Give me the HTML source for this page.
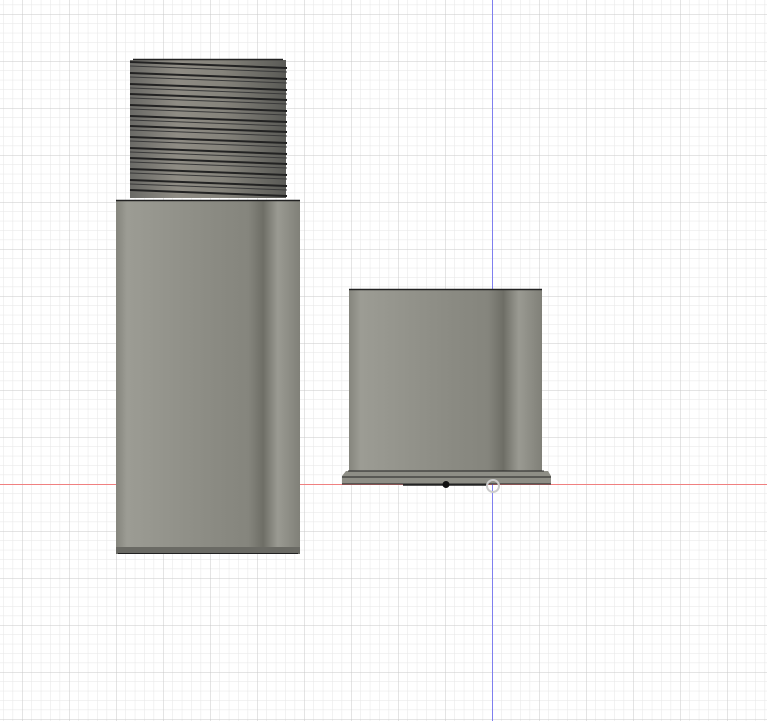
<!DOCTYPE html>
<html><head><style>html,body{margin:0;padding:0;background:#fff;overflow:hidden}</style></head>
<body>
<svg width="767" height="721" xmlns="http://www.w3.org/2000/svg">
<defs>
<pattern id="minor" x="492" y="484" width="9.4" height="9.4" patternUnits="userSpaceOnUse">
<path d="M0 0V9.4M0 0H9.4" stroke="#e6e6e6" stroke-width="1" fill="none"/>
</pattern>
<pattern id="major" x="492" y="484" width="47" height="47" patternUnits="userSpaceOnUse">
<path d="M0 0V47M0 0H47" stroke="#c9c9c9" stroke-width="1" fill="none"/>
</pattern>
<linearGradient id="cyl" x1="0" x2="1">
<stop offset="0" stop-color="#85857d"/>
<stop offset="0.06" stop-color="#9c9c94"/>
<stop offset="0.3" stop-color="#93938b"/>
<stop offset="0.55" stop-color="#8a8a82"/>
<stop offset="0.72" stop-color="#85857d"/>
<stop offset="0.8" stop-color="#6e6e66"/>
<stop offset="0.88" stop-color="#9a9a92"/>
<stop offset="1" stop-color="#808078"/>
</linearGradient>
<linearGradient id="thr" x1="0" x2="1">
<stop offset="0" stop-color="#6a6a66"/>
<stop offset="0.3" stop-color="#8f8c84"/>
<stop offset="0.6" stop-color="#85837b"/>
<stop offset="1" stop-color="#5a5a56"/>
</linearGradient>
</defs>
<rect width="767" height="721" fill="url(#minor)"/>
<rect width="767" height="721" fill="url(#major)"/>
<line x1="0" y1="484.5" x2="767" y2="484.5" stroke="#f08080" stroke-width="1"/>
<line x1="492.5" y1="0" x2="492.5" y2="721" stroke="#7f7fef" stroke-width="1"/>
<!-- thread -->
<rect x="130" y="60" width="156" height="138" fill="url(#thr)"/>
<g stroke="#222" fill="none">
<g stroke-width="2">
<line x1="130" y1="62" x2="287" y2="68"/><line x1="130" y1="73" x2="287" y2="79"/>
<line x1="130" y1="84" x2="287" y2="90"/><line x1="130" y1="94" x2="287" y2="100"/>
<line x1="130" y1="105" x2="287" y2="111"/><line x1="130" y1="116" x2="287" y2="122"/>
<line x1="130" y1="126" x2="287" y2="132"/><line x1="130" y1="137" x2="287" y2="143"/>
<line x1="130" y1="148" x2="287" y2="154"/><line x1="130" y1="158" x2="287" y2="164"/>
<line x1="130" y1="169" x2="287" y2="175"/><line x1="130" y1="180" x2="287" y2="186"/>
<line x1="130" y1="190" x2="287" y2="196"/>
</g>
<g stroke-width="1" stroke="#3a3a3a">
<line x1="130" y1="66" x2="287" y2="72"/><line x1="130" y1="77" x2="287" y2="83"/>
<line x1="130" y1="88" x2="287" y2="94"/><line x1="130" y1="98" x2="287" y2="104"/>
<line x1="130" y1="109" x2="287" y2="115"/><line x1="130" y1="120" x2="287" y2="126"/>
<line x1="130" y1="130" x2="287" y2="136"/><line x1="130" y1="141" x2="287" y2="147"/>
<line x1="130" y1="152" x2="287" y2="158"/><line x1="130" y1="162" x2="287" y2="168"/>
<line x1="130" y1="173" x2="287" y2="179"/><line x1="130" y1="184" x2="287" y2="190"/>
</g>
</g>
<line x1="133" y1="59.5" x2="283" y2="59.5" stroke="#222" stroke-width="1.5"/>
<!-- left cylinder -->
<rect x="116" y="200" width="184" height="353" fill="url(#cyl)"/>
<line x1="116" y1="200.5" x2="300" y2="200.5" stroke="#222" stroke-width="1.5"/>
<rect x="116" y="547" width="184" height="7" fill="#6a6a64"/>
<line x1="118" y1="553.5" x2="298" y2="553.5" stroke="#222" stroke-width="1"/>
<!-- cup -->
<rect x="349" y="289" width="193" height="182" fill="url(#cyl)"/>
<line x1="349" y1="289.5" x2="542" y2="289.5" stroke="#222" stroke-width="1.5"/>
<path d="M346 471 H548 L551 476 V484 H342 V476 Z" fill="#8e8e86"/>
<line x1="348" y1="471" x2="544" y2="471" stroke="#222" stroke-width="1"/>
<line x1="342" y1="477" x2="551" y2="477" stroke="#222" stroke-width="1"/>
<line x1="342" y1="484" x2="551" y2="484" stroke="#222" stroke-width="1"/>
<line x1="403" y1="485" x2="488" y2="485" stroke="#222" stroke-width="1.5"/>
<circle cx="446" cy="484.5" r="3.5" fill="#111"/>
<circle cx="493" cy="486" r="6" fill="none" stroke="#ccc" stroke-width="2"/>
</svg>
</body></html>
